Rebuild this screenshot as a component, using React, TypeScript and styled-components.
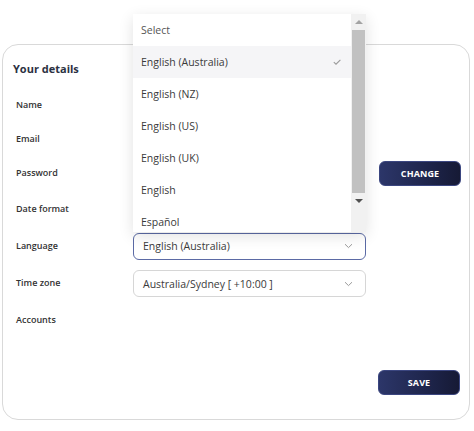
import styled, { createGlobalStyle } from 'styled-components';

const GlobalStyle = createGlobalStyle`
  html, body {
    margin: 0;
    padding: 0;
    background: #fff;
  }

  body {
    font-family: 'Open Sans', 'Liberation Sans', sans-serif;
    color: #333;
  }
`;

const LANGUAGES = [
  'English (Australia)',
  'English (NZ)',
  'English (US)',
  'English (UK)',
  'English',
  'Español',
];

const ROWS = [
  { label: 'Name', height: 34 },
  { label: 'Email', height: 34 },
  { label: 'Password', height: 35 },
  { label: 'Date format', height: 36 },
  { label: 'Language', height: 38 },
  { label: 'Time zone', height: 37 },
  { label: 'Accounts', height: 37 },
];

const Page = styled.div`
  padding: 44px 4px 12px 2px;
`;

const Card = styled.section`
  box-sizing: border-box;
  height: 376px;
  border: 1px solid #d9d9d9;
  border-radius: 16px;
  padding: 12px 9px 24px 10px;
  display: flex;
  flex-direction: column;
  background: #fff;
`;

const Title = styled.h2`
  margin: 0 0 7px;
  font-size: 11px;
  line-height: 24px;
  font-weight: 700;
  color: #2b3142;
`;

const Rows = styled.div`
  display: flex;
  flex-direction: column;
`;

const Row = styled.div<{ $height: number }>`
  display: grid;
  grid-template-columns: 107px 233px auto;
  column-gap: 13px;
  align-items: center;
  height: ${({ $height }) => $height}px;
`;

const Label = styled.span`
  padding-left: 3px;
  font-size: 9px;
  font-weight: 600;
  color: #333;
  margin-top: -2px;
`;

const Field = styled.div`
  position: relative;
`;

const SelectBox = styled.div<{ $focused?: boolean }>`
  box-sizing: border-box;
  height: 27px;
  display: flex;
  align-items: center;
  justify-content: space-between;
  padding: 0 12px 0 9px;
  border: 1px solid ${({ $focused }) => ($focused ? '#5b6aa5' : '#d6d6d6')};
  border-radius: 6px;
  font-size: 10.5px;
  color: #3a3a3a;
  background: #fff;
`;

const Chevron = styled.svg`
  width: 9px;
  height: 6px;
  stroke: #9a9a9a;
  fill: none;
  stroke-width: 1;
`;

const Button = styled.button`
  box-sizing: border-box;
  width: 82px;
  height: 25px;
  border: 1px solid #3b4680;
  border-radius: 6px;
  background: linear-gradient(90deg, #2c3669 0%, #1c2246 70%, #161a35 100%);
  color: #fff;
  font-family: 'Open Sans', 'Liberation Sans', sans-serif;
  font-size: 9px;
  font-weight: 700;
  letter-spacing: 0.1px;
  cursor: pointer;
`;

const Footer = styled.div`
  margin-top: auto;
  display: flex;
  justify-content: flex-end;
`;

const Menu = styled.div`
  position: absolute;
  left: 0;
  right: 0;
  bottom: calc(100% + 1px);
  height: 218px;
  display: flex;
  background: #fff;
  box-shadow: 0 4px 14px rgba(0, 0, 0, 0.12);
  z-index: 5;
`;

const MenuList = styled.ul`
  flex: 1;
  margin: 0;
  padding: 0;
  list-style: none;
  overflow: hidden;
`;

const MenuItem = styled.li<{ $selected?: boolean; $placeholder?: boolean }>`
  height: 32px;
  display: flex;
  align-items: center;
  justify-content: space-between;
  padding: 0 10px 0 8px;
  font-size: 10.5px;
  color: ${({ $placeholder }) => ($placeholder ? '#555' : '#3a3a3a')};
  background: ${({ $selected }) => ($selected ? '#f5f5f7' : '#fff')};
`;

const Check = styled.svg`
  width: 8px;
  height: 6px;
  stroke: #9a9a9a;
  fill: none;
  stroke-width: 1.1;
`;

const Scrollbar = styled.div`
  width: 15px;
  display: flex;
  flex-direction: column;
  align-items: center;
  background: #f1f1f1;
`;

const ScrollArrow = styled.div<{ $down?: boolean }>`
  height: 16px;
  display: flex;
  align-items: center;
  justify-content: center;

  &::before {
    content: '';
    border-left: 4px solid transparent;
    border-right: 4px solid transparent;
    ${({ $down }) =>
      $down ? 'border-top: 4px solid #505050;' : 'border-bottom: 4px solid #a3a3a3;'}
  }
`;

const ScrollThumb = styled.div`
  width: 13px;
  height: 163px;
  background: #c1c1c1;
`;

function ChevronIcon() {
  return (
    <Chevron viewBox="0 0 9 6">
      <path d="M1 1.2 L4.5 4.6 L8 1.2" />
    </Chevron>
  );
}

function LanguageMenu() {
  return (
    <Menu>
      <MenuList>
        <MenuItem $placeholder>Select</MenuItem>
        {LANGUAGES.map((language, index) => (
          <MenuItem key={language} $selected={index === 0}>
            {language}
            {index === 0 && (
              <Check viewBox="0 0 8 6">
                <path d="M0.8 3.2 L3 5.2 L7.4 0.8" />
              </Check>
            )}
          </MenuItem>
        ))}
      </MenuList>
      <Scrollbar>
        <ScrollArrow />
        <ScrollThumb />
        <ScrollArrow $down />
      </Scrollbar>
    </Menu>
  );
}

function renderField(label: string) {
  if (label === 'Language') {
    return (
      <Field>
        <LanguageMenu />
        <SelectBox $focused>
          English (Australia)
          <ChevronIcon />
        </SelectBox>
      </Field>
    );
  }

  if (label === 'Time zone') {
    return (
      <Field>
        <SelectBox>
          Australia/Sydney [ +10:00 ]
          <ChevronIcon />
        </SelectBox>
      </Field>
    );
  }

  return <Field />;
}

export default function App() {
  return (
    <>
      <GlobalStyle />
      <Page>
        <Card>
          <Title>Your details</Title>
          <Rows>
            {ROWS.map((row) => (
              <Row key={row.label} $height={row.height}>
                <Label>{row.label}</Label>
                {renderField(row.label)}
                {row.label === 'Password' && <Button>CHANGE</Button>}
              </Row>
            ))}
          </Rows>
          <Footer>
            <Button>SAVE</Button>
          </Footer>
        </Card>
      </Page>
    </>
  );
}
